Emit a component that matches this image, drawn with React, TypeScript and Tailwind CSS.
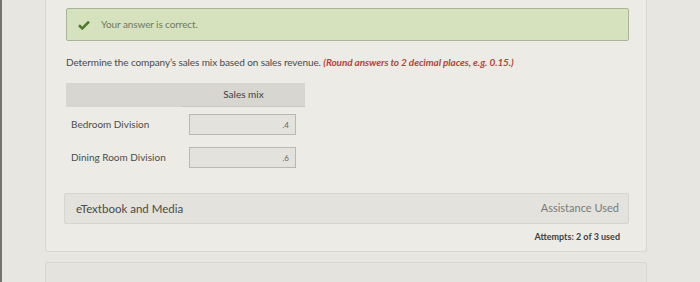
export default function App() {
  return (
    <div
      className="w-[700px] h-[282px] overflow-hidden bg-[#e8e6e0] flex"
      style={{ fontFamily: "Lato, 'Open Sans', sans-serif" }}
    >
      <div className="w-[2px] bg-[#77736c]" />
      <div className="flex-1 pl-[43px] flex flex-col">
        <div className="w-[602px] h-[252px] bg-[#edebe6] border border-t-0 border-[#d9d7d1] rounded-b-[3px] pl-[20px] pr-[17px] pt-[8px]">
          {/* correct banner */}
          <div className="h-[33px] bg-[#d6e1bd] border border-[#a9b49a] rounded-[2px] flex items-center pl-[11px]">
            <svg width="12" height="10" viewBox="0 0 12 10" className="mr-[11px]">
              <path d="M1 5.2 L4.3 8.4 L11 1.6" fill="none" stroke="#4f7a2c" strokeWidth="2.6" strokeLinejoin="miter" />
            </svg>
            <span className="text-[10px] text-[#6f7a5f] tracking-[-0.1px]">Your answer is correct.</span>
          </div>

          <p className="mt-[16px] text-[10px] text-[#4a4a48] tracking-[-0.1px] leading-none">
            Determine the company’s sales mix based on sales revenue.{" "}
            <span className="italic font-bold text-[#b8433a]">(Round answers to 2 decimal places, e.g. 0.15.)</span>
          </p>

          {/* table */}
          <div className="mt-[16px] w-[239px]">
            <div className="h-[24px] bg-[#d7d6d1] flex">
              <div className="w-[116px]" />
              <div className="flex-1 flex items-center justify-center text-[10px] text-[#3f3f3d] border-b border-[#c9c8c3]">
                Sales mix
              </div>
            </div>
            <div className="flex items-center mt-[7px] h-[21px]">
              <div className="w-[123px] pl-[5px] text-[10px] text-[#4c4c4a]">Bedroom Division</div>
              <div className="w-[107px] h-[21px] bg-[#e3e2dd] border border-[#b9b8b3] flex items-center justify-end pr-[6px] text-[8px] text-[#66665f]">
                .4
              </div>
            </div>
            <div className="flex items-center mt-[12px] h-[21px]">
              <div className="w-[123px] pl-[5px] text-[10px] text-[#4c4c4a]">Dining Room Division</div>
              <div className="w-[107px] h-[21px] bg-[#e3e2dd] border border-[#b9b8b3] flex items-center justify-end pr-[6px] text-[8px] text-[#66665f]">
                .6
              </div>
            </div>
          </div>

          {/* footer */}
          <div className="mt-[25px] -ml-[2px] h-[31px] bg-[#e3e2dd] border border-[#d6d5cf] rounded-[2px] flex items-center justify-between pl-[11px] pr-[9px]">
            <span className="text-[11.5px] text-[#4a4a48]">eTextbook and Media</span>
            <span className="text-[11px] text-[#7a7a76]">Assistance Used</span>
          </div>
          <div className="mt-[6px] text-right pr-[9px] text-[9px] font-bold text-[#3f3f3d]">
            Attempts: 2 of 3 used
          </div>
        </div>
        <div className="mt-[10px] w-[602px] flex-1 bg-[#e5e3de] border border-b-0 border-[#d9d7d1] rounded-t-[3px]" />
      </div>
    </div>
  );
}
